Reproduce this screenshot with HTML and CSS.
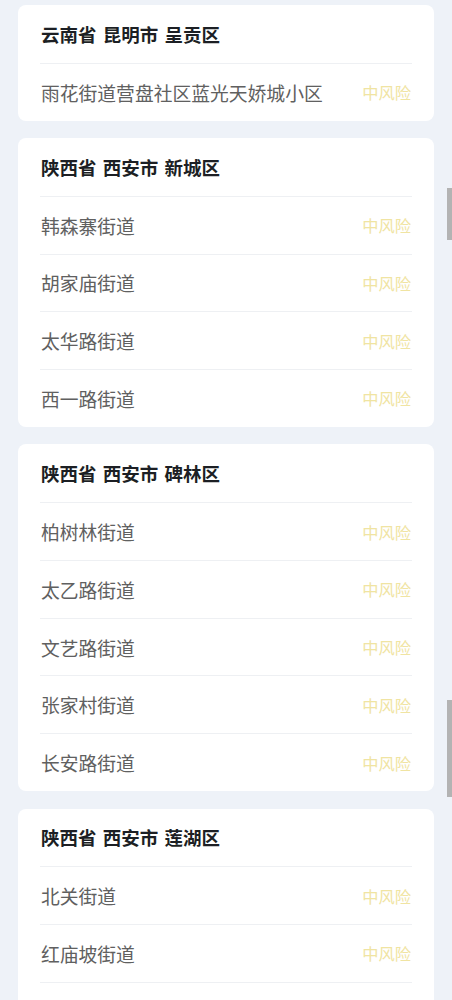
FILE: index.html
```html
<!DOCTYPE html>
<html lang="zh-CN">
<head>
  <meta charset="UTF-8">
  <meta name="viewport" content="width=device-width, initial-scale=1.0">
  <title>中风险地区</title>
  <link rel="stylesheet" href="styles.css">
</head>
<body>
  <main class="list">
    <section class="card">
      <h2 class="area">云南省 昆明市 呈贡区</h2>
      <div class="row"><span class="place">雨花街道营盘社区蓝光天娇城小区</span><span class="risk">中风险</span></div>
    </section>
    <section class="card">
      <h2 class="area">陕西省 西安市 新城区</h2>
      <div class="row"><span class="place">韩森寨街道</span><span class="risk">中风险</span></div>
      <div class="row"><span class="place">胡家庙街道</span><span class="risk">中风险</span></div>
      <div class="row"><span class="place">太华路街道</span><span class="risk">中风险</span></div>
      <div class="row"><span class="place">西一路街道</span><span class="risk">中风险</span></div>
    </section>
    <section class="card">
      <h2 class="area">陕西省 西安市 碑林区</h2>
      <div class="row"><span class="place">柏树林街道</span><span class="risk">中风险</span></div>
      <div class="row"><span class="place">太乙路街道</span><span class="risk">中风险</span></div>
      <div class="row"><span class="place">文艺路街道</span><span class="risk">中风险</span></div>
      <div class="row"><span class="place">张家村街道</span><span class="risk">中风险</span></div>
      <div class="row"><span class="place">长安路街道</span><span class="risk">中风险</span></div>
    </section>
    <section class="card">
      <h2 class="area">陕西省 西安市 莲湖区</h2>
      <div class="row"><span class="place">北关街道</span><span class="risk">中风险</span></div>
      <div class="row"><span class="place">红庙坡街道</span><span class="risk">中风险</span></div>
      <div class="row"></div>
    </section>
  </main>
  <div class="thumb thumb-a"></div>
  <div class="thumb thumb-b"></div>
</body>
</html>
```

FILE: styles.css
```css
* {
  padding: 0;
  margin: 0;
  box-sizing: border-box;
}
html, body {
  height: 1000px;
  overflow: hidden;
}
body {
  position: relative;
  background-color: #eef2f8;
  font-family: "Noto Sans CJK SC", "Noto Sans", sans-serif;
}
.list {
  display: flex;
  flex-direction: column;
  gap: 17.6px;
  padding: 5px 18px 0;
}
.card {
  background-color: #fff;
  border-radius: 8px;
  padding: 0 22px;
}
.area {
  height: 57.75px;
  display: flex;
  align-items: center;
  font-size: 18.5px;
  font-weight: 700;
  color: #1c1f24;
  word-spacing: 2px;
  padding-left: 1px;
}
.row {
  height: 57.75px;
  display: flex;
  align-items: center;
  justify-content: space-between;
  border-top: 1px solid #eef0f3;
  padding: 0 1px;
}
.place {
  font-size: 18.8px;
  color: #606060;
}
.risk {
  font-size: 16.3px;
  color: #f0e4a2;
}
.thumb {
  position: absolute;
  right: 0;
  width: 5px;
  background-color: #b3b3b3;
}
.thumb-a {
  top: 188px;
  height: 52px;
}
.thumb-b {
  top: 700px;
  height: 97px;
}
```
